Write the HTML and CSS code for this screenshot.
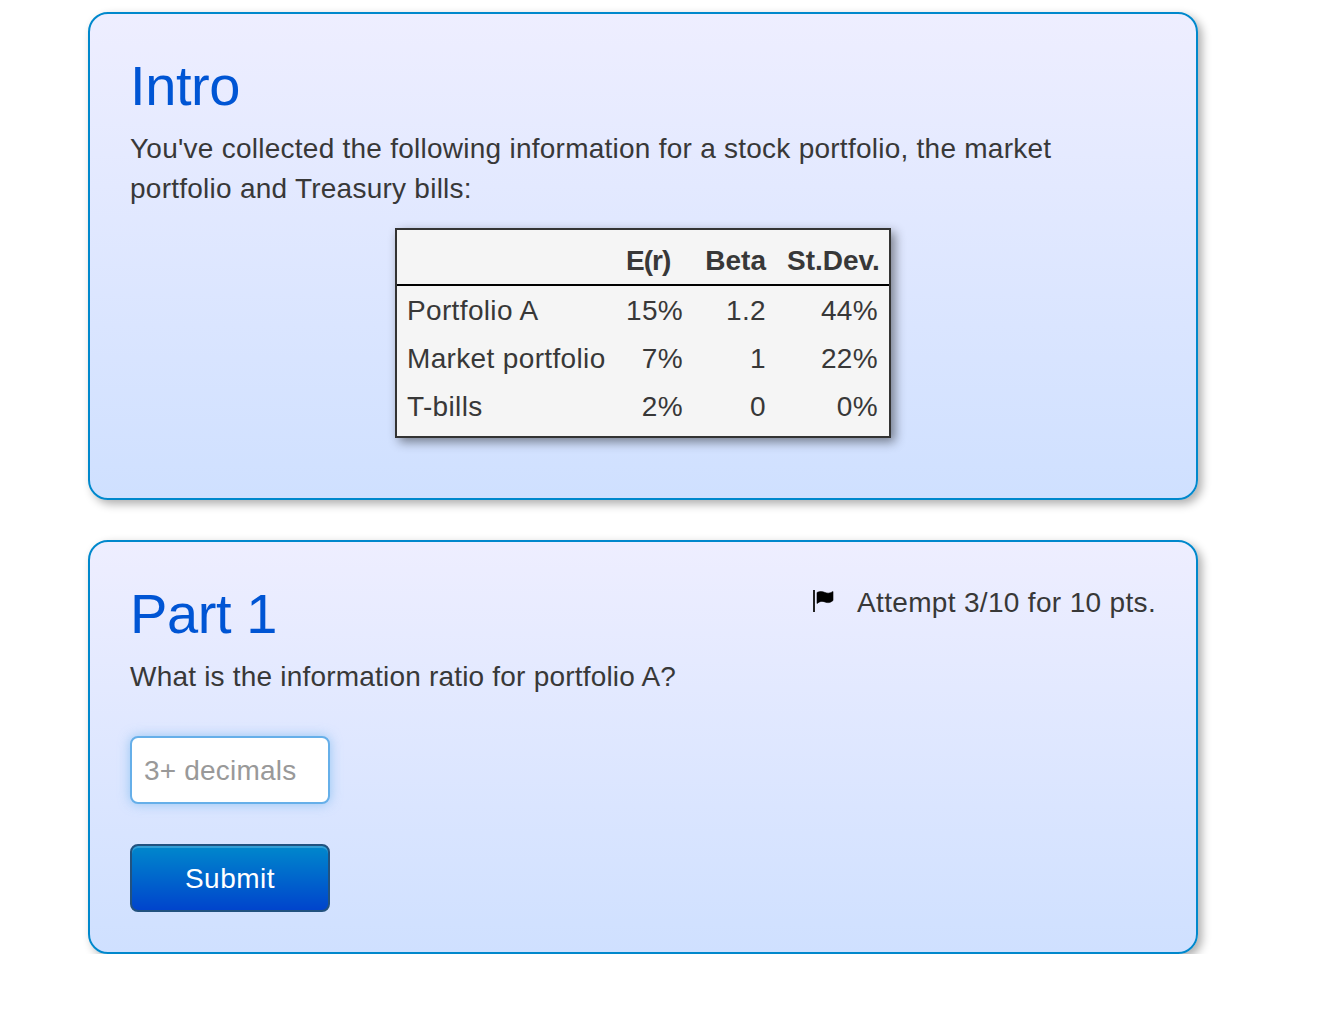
FILE: index.html
```html
<!DOCTYPE html>
<html lang="en">
<head>
<meta charset="utf-8">
<title>Intro</title>
<link rel="stylesheet" href="styles.css">
</head>
<body>
<main class="page">
  <section class="card card-intro">
    <h2 class="title">Intro</h2>
    <p class="text">You've collected the following information for a stock portfolio, the market portfolio and Treasury bills:</p>
    <table class="data">
      <colgroup>
        <col class="col-name"><col class="col-er"><col class="col-beta"><col class="col-dev">
      </colgroup>
      <thead>
        <tr><th class="left"></th><th class="left er">E(r)</th><th>Beta</th><th class="dev">St.Dev.</th></tr>
      </thead>
      <tbody>
        <tr><td class="left">Portfolio A</td><td>15%</td><td>1.2</td><td>44%</td></tr>
        <tr><td class="left">Market portfolio</td><td>7%</td><td>1</td><td>22%</td></tr>
        <tr class="last"><td class="left">T-bills</td><td>2%</td><td>0</td><td>0%</td></tr>
      </tbody>
    </table>
  </section>
  <section class="card card-part">
    <div class="head">
      <h2 class="title">Part 1</h2>
      <div class="attempt">
        <svg class="flag" width="22" height="22" viewBox="0 0 22 22" aria-hidden="true">
          <rect x="1" y="0" width="2" height="22" fill="#222"/>
          <path d="M5 2.500C8 1 10.500 1.500 13 2.500S18 3.500 21 1.500V10.500C18 13 15.500 13 13 12S8 11 5 13.500Z" fill="#000" stroke="#000" stroke-width="0.6" stroke-linejoin="round"/>
        </svg>
        <span>Attempt 3/10 for 10 pts.</span>
      </div>
    </div>
    <p class="text question">What is the information ratio for portfolio A?</p>
    <input class="answer" type="text" placeholder="3+ decimals">
    <button class="submit" type="button">Submit</button>
  </section>
</main>
</body>
</html>
```
FILE: styles.css
```css
* { box-sizing: border-box; }
html, body { margin: 0; background: #fff; }
body {
  font-family: "Liberation Sans", Arial, sans-serif;
  color: #383838;
  font-size: 28px;
  line-height: 40px;
  letter-spacing: 0.25px;
}
.page {
  width: 1110px;
  margin-left: 88px;
  padding-top: 12px;
  display: flex;
  flex-direction: column;
  gap: 40px;
}
.card {
  border: 2px solid #0088cc;
  border-radius: 20px;
  background: linear-gradient(#eeeeff, #cfe0ff);
  box-shadow: 4px 4px 10px rgba(0, 0, 0, 0.32);
  padding: 39px 40px 40px;
  display: flex;
  flex-direction: column;
  align-items: flex-start;
}
.card-intro { height: 488px; }
.card-part { height: 414px; }
.title {
  margin: 0;
  font-size: 56px;
  line-height: 66px;
  font-weight: 400;
  letter-spacing: -0.4px;
  color: #0055d4;
}
.text { margin: 10px 0 0; }
.question { letter-spacing: 0.2px; }
.data {
  align-self: center;
  width: 496px;
  table-layout: fixed;
  margin-top: 19px;
  border: 2px solid #333;
  border-collapse: separate;
  border-spacing: 0;
  background: #f5f5f5;
  box-shadow: 4px 4px 10px rgba(0, 0, 0, 0.45);
  letter-spacing: 0.35px;
}
.col-name { width: 219px; }
.col-er { width: 78px; }
.col-beta { width: 83px; }
.col-dev { width: 112px; }
.data th, .data td {
  padding: 5px 11px 3px 10px;
  text-align: right;
  white-space: nowrap;
}
.data th {
  height: 56px;
  padding-top: 11px;
  padding-bottom: 3px;
  border-bottom: 2px solid #000;
  font-weight: 700;
  letter-spacing: 0;
}
.data .er { letter-spacing: -1px; }
.data .dev { padding-right: 12px; }
.data td { height: 48px; }
.data .last td { height: 54px; padding-bottom: 9px; }
.data .left { text-align: left; }
.head {
  width: 100%;
  display: flex;
  justify-content: space-between;
  align-items: flex-start;
}
.attempt {
  display: flex;
  align-items: center;
  gap: 23px;
  margin-top: 2px;
  letter-spacing: 0.33px;
}
.flag { display: block; flex: none; margin-top: -4px; }
.answer {
  width: 200px;
  height: 68px;
  margin-top: 39px;
  padding: 2px 12px 0;
  border: 2px solid #66afe9;
  border-radius: 8px;
  background: #fff;
  box-shadow: 0 0 12px rgba(102, 175, 233, 0.6);
  font: inherit;
  letter-spacing: 0.2px;
  color: #333;
}
.answer::placeholder { color: #999; opacity: 1; }
.submit {
  width: 200px;
  height: 68px;
  margin-top: 40px;
  padding: 2px 0 0;
  border: 2px solid #22527f;
  border-radius: 8px;
  background: linear-gradient(#0088cc, #0044cc);
  box-shadow: inset 0 2px 0 rgba(255, 255, 255, 0.2);
  font: inherit;
  letter-spacing: 0.5px;
  color: #fff;
}
```
